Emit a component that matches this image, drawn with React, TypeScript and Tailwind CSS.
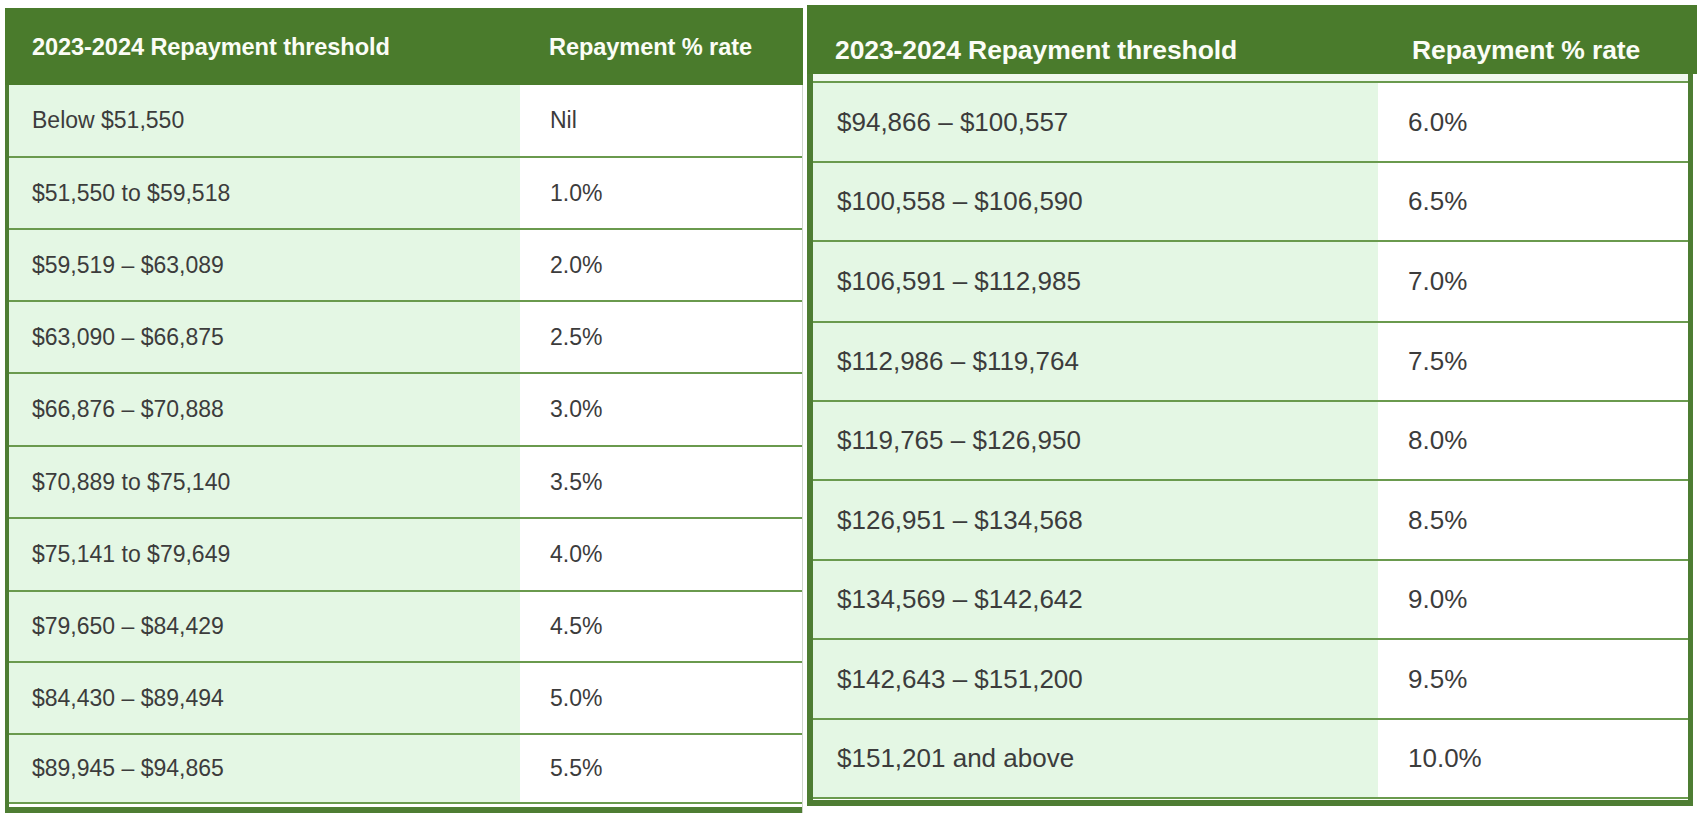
import React from "react";

const leftRows: { t: string; r: string; h: string }[] = [
  { t: "Below $51,550", r: "Nil", h: "h-[73px]" },
  { t: "$51,550 to $59,518", r: "1.0%", h: "h-[72px]" },
  { t: "$59,519 – $63,089", r: "2.0%", h: "h-[72px]" },
  { t: "$63,090 – $66,875", r: "2.5%", h: "h-[72px]" },
  { t: "$66,876 – $70,888", r: "3.0%", h: "h-[73px]" },
  { t: "$70,889 to $75,140", r: "3.5%", h: "h-[72px]" },
  { t: "$75,141 to $79,649", r: "4.0%", h: "h-[73px]" },
  { t: "$79,650 – $84,429", r: "4.5%", h: "h-[71px]" },
  { t: "$84,430 – $89,494", r: "5.0%", h: "h-[72px]" },
  { t: "$89,945 – $94,865", r: "5.5%", h: "h-[69px]" },
];

const rightRows: { t: string; r: string; h: string }[] = [
  { t: "$94,866 – $100,557", r: "6.0%", h: "h-[80px]" },
  { t: "$100,558 – $106,590", r: "6.5%", h: "h-[79px]" },
  { t: "$106,591 – $112,985", r: "7.0%", h: "h-[81px]" },
  { t: "$112,986 – $119,764", r: "7.5%", h: "h-[79px]" },
  { t: "$119,765 – $126,950", r: "8.0%", h: "h-[79px]" },
  { t: "$126,951 – $134,568", r: "8.5%", h: "h-[80px]" },
  { t: "$134,569 – $142,642", r: "9.0%", h: "h-[79px]" },
  { t: "$142,643 – $151,200", r: "9.5%", h: "h-[80px]" },
  { t: "$151,201 and above", r: "10.0%", h: "h-[79px]" },
];

export default function App() {
  return (
    <div className="w-[1704px] h-[818px] bg-white flex items-start overflow-hidden font-['Liberation_Sans',Arial,sans-serif]">
      {/* Left table */}
      <div className="ml-[5px] mt-[8px] w-[798px] flex flex-col">
        <div className="flex h-[77px] items-center pt-[2px] bg-[#4a7b2c] text-[#fbfdf6] font-bold text-[23.6px] tracking-[-0.1px]">
          <div className="w-[515px] pl-[27px]">2023-2024 Repayment threshold</div>
          <div className="pl-[29px]">Repayment % rate</div>
        </div>
        <div className="flex flex-col border-l-4 border-l-[#4e7d33] border-r border-r-[#cfd6cc]">
          {leftRows.map((row) => (
            <div key={row.t} className={`flex border-b-2 border-b-[#6a9a4e] ${row.h}`}>
              <div className="w-[511px] bg-[#e4f7e4] pl-[23px] flex items-center text-[23px] text-[#3c3c3c]">
                {row.t}
              </div>
              <div className="flex-1 bg-white pl-[30px] flex items-center text-[23px] text-[#3c3c3c]">
                {row.r}
              </div>
            </div>
          ))}
          <div className="h-[3px] bg-white" />
          <div className="h-[6px] bg-[#4e7d33]" />
        </div>
      </div>

      {/* Right table */}
      <div className="ml-[4px] mt-[5px] w-[890px] flex flex-col">
        <div className="flex h-[69px] items-center pt-[22px] bg-[#4a7b2c] text-[#fbfdf6] font-bold text-[26.5px] tracking-[-0.1px]">
          <div className="w-[571px] pl-[28px]">2023-2024 Repayment threshold</div>
          <div className="pl-[34px]">Repayment % rate</div>
        </div>
        <div className="w-[886px] flex flex-col border-l-[6px] border-r-[5px] border-[#4e7d33]">
          <div className="h-[7px] bg-[#f1f8ef]" />
          <div className="h-[2px] bg-[#6a9a4e]" />
          {rightRows.map((row) => (
            <div key={row.t} className={`flex border-b-2 border-b-[#6a9a4e] ${row.h}`}>
              <div className="w-[565px] bg-[#e4f7e4] pl-[24px] flex items-center text-[26px] text-[#3c3c3c]">
                {row.t}
              </div>
              <div className="flex-1 bg-white pl-[30px] flex items-center text-[26px] text-[#3c3c3c]">
                {row.r}
              </div>
            </div>
          ))}
          <div className="h-[1px] bg-white" />
          <div className="h-[6px] bg-[#4e7d33]" />
        </div>
      </div>
    </div>
  );
}
